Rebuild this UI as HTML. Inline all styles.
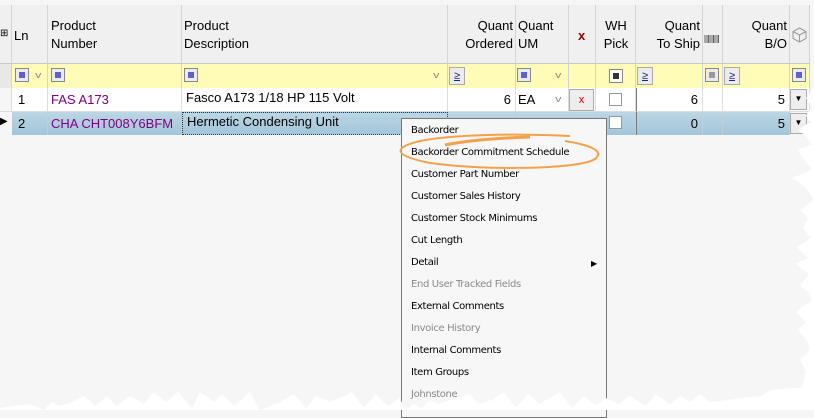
<!DOCTYPE html>
<html><head><style>
*{margin:0;padding:0;box-sizing:border-box}
body{width:814px;height:410px;overflow:hidden;background:#f6f6f6;font-family:"Liberation Sans",sans-serif;font-size:13px;color:#000;position:relative}
.a{position:absolute}
.hd{position:absolute;top:5px;height:59px;background:#f0f0f0;border-right:1px solid #d4d4d4;border-bottom:1px solid #c8c8c8}
.hd span{position:absolute;top:12px;line-height:18px}
.fl{position:absolute;top:64px;height:24px;background:#fffcb8;border-right:1px solid #d4d4d4}
.r1{position:absolute;top:88px;height:24px;background:#fff;border-right:1px solid #ddd;border-bottom:1px solid #ddd}
.r2{position:absolute;top:112px;height:23px;background:linear-gradient(#bcd6e4,#a3c5d9);border-right:1px solid #bcd0dc}
.bx{position:absolute;width:14px;height:14px;border:1px solid #888;background:#ececec}
.bx i{position:absolute;left:3px;top:3px;width:6px;height:6px;background:#5f5fd0}
.ge{position:absolute;width:16px;height:18px;border:1px solid #aaa;background:#ececec;color:#22228a;font-size:11px;text-align:center;line-height:16px;text-decoration:underline}
.chev{position:absolute;color:#888;font-size:9px;transform:scaleX(1.4)}
.mi{position:absolute;left:411px;font-family:"DejaVu Sans",sans-serif;font-size:10px;letter-spacing:-0.35px}
.dis{color:#8a8a8a}
</style></head><body>
<div class="a" style="left:0;top:5px;width:810px;height:1px;background:#ccc"></div>
<div class="hd" style="left:0;width:12px"><span style="left:0;top:20px;font-size:10px">⊞</span></div>
<div class="hd" style="left:12px;width:36px"><span style="left:2px;top:22px">Ln</span></div>
<div class="hd" style="left:48px;width:134px"><span style="left:3px">Product<br>Number</span></div>
<div class="hd" style="left:182px;width:266px"><span style="left:2px">Product<br>Description</span></div>
<div class="hd" style="left:448px;width:68px"><span style="right:2px;text-align:right">Quant<br>Ordered</span></div>
<div class="hd" style="left:516px;width:53px"><span style="left:2px">Quant<br>UM</span></div>
<div class="hd" style="left:569px;width:27px"><span style="left:9px;top:22px;color:#900;font-weight:bold">x</span></div>
<div class="hd" style="left:596px;width:40px"><span style="left:0;width:40px;text-align:center">WH<br>Pick</span></div>
<div class="hd" style="left:636px;width:67px"><span style="right:2px;text-align:right">Quant<br>To Ship</span></div>
<div class="hd" style="left:703px;width:20px"><svg class="a" style="left:1px;top:30px" width="16" height="8"><path d="M1 0v8M3 0v8M4.5 0v8M6 0v8M8 0v8M9.5 0v8M11 0v8M13 0v8M14.5 0v8" stroke="#555" stroke-width="0.9"/></svg></div>
<div class="hd" style="left:723px;width:67px"><span style="right:2px;text-align:right">Quant<br>B/O</span></div>
<div class="hd" style="left:790px;width:20px"><svg class="a" style="left:2px;top:22px" width="15" height="16"><path d="M7.5 1L14 4.5V11.5L7.5 15L1 11.5V4.5Z M1 4.5L7.5 8L14 4.5 M7.5 8V15" fill="none" stroke="#999"/></svg></div>
<div class="fl" style="left:0;width:12px;background:#e8e8e8"></div>
<div class="fl" style="left:12px;width:36px"><div class="bx" style="left:3px;top:4px"><i></i></div><span class="chev" style="left:24px;top:6px">v</span></div>
<div class="fl" style="left:48px;width:134px"><div class="bx" style="left:3px;top:4px"><i></i></div></div>
<div class="fl" style="left:182px;width:266px"><div class="bx" style="left:2px;top:4px"><i></i></div><span class="chev" style="left:252px;top:6px">v</span></div>
<div class="fl" style="left:448px;width:68px"><div class="ge" style="left:1px;top:3px">≥</div></div>
<div class="fl" style="left:516px;width:53px"><div class="bx" style="left:1px;top:4px"><i></i></div><span class="chev" style="left:40px;top:6px">v</span></div>
<div class="fl" style="left:569px;width:27px"></div>
<div class="fl" style="left:596px;width:40px"><div class="bx" style="left:13px;top:5px;background:#fff"><i style="background:#333"></i></div></div>
<div class="fl" style="left:636px;width:67px"><div class="ge" style="left:1px;top:3px">≥</div></div>
<div class="fl" style="left:703px;width:20px"><div class="bx" style="left:2px;top:4px"><i style="background:#999"></i></div></div>
<div class="fl" style="left:723px;width:67px"><div class="ge" style="left:1px;top:3px">≥</div></div>
<div class="fl" style="left:790px;width:20px"><div class="bx" style="left:2px;top:4px"><i></i></div></div>
<div class="r1" style="left:0;width:12px;background:#f6f6f6"></div>
<div class="r1" style="left:12px;width:36px"><span class="a" style="left:6px;top:4px">1</span></div>
<div class="r1" style="left:48px;width:134px"><span class="a" style="left:3px;top:4px;color:#800080">FAS A173</span></div>
<div class="r1" style="left:182px;width:266px"><span class="a" style="left:4px;top:2px">Fasco A173 1/18 HP 115 Volt</span></div>
<div class="r1" style="left:448px;width:68px"><span class="a" style="right:4px;top:4px">6</span></div>
<div class="r1" style="left:516px;width:53px"><span class="a" style="left:2px;top:4px">EA</span><span class="chev" style="left:40px;top:6px">v</span></div>
<div class="r1" style="left:569px;width:27px"><div class="a" style="left:0;top:1px;width:25px;height:22px;border:1px solid #aaa;background:#eee;color:#e00;text-align:center;line-height:20px;font-size:11px">x</div></div>
<div class="r1" style="left:596px;width:40px"><div class="a" style="left:13px;top:5px;width:13px;height:13px;border:1px solid #999;background:#fff"></div></div>
<div class="r1" style="left:636px;width:67px;border-left:1px solid #777"><span class="a" style="right:4px;top:4px">6</span></div>
<div class="r1" style="left:703px;width:20px"></div>
<div class="r1" style="left:723px;width:67px"><span class="a" style="right:4px;top:4px">5</span></div>
<div class="r1" style="left:790px;width:20px"><div class="a" style="left:0;top:1px;width:17px;height:21px;border:1px solid #aaa;background:#eee;text-align:center;font-size:8px;line-height:18px">▼</div></div>
<div class="a" style="left:0;top:116px;font-size:10px">▶</div>
<div class="r2" style="left:12px;width:36px"><span class="a" style="left:6px;top:4px">2</span></div>
<div class="r2" style="left:48px;width:134px"><span class="a" style="left:3px;top:4px;color:#800080">CHA CHT008Y6BFM</span></div>
<div class="r2" style="left:182px;width:266px;border:1px dotted #333"><span class="a" style="left:4px;top:1px">Hermetic Condensing Unit</span></div>
<div class="r2" style="left:448px;width:68px"></div>
<div class="r2" style="left:516px;width:53px"></div>
<div class="r2" style="left:569px;width:27px"></div>
<div class="r2" style="left:596px;width:40px"><div class="a" style="left:13px;top:4px;width:13px;height:13px;border:1px solid #999;background:#fff"></div></div>
<div class="r2" style="left:636px;width:67px;border-left:1px solid #777"><span class="a" style="right:4px;top:4px">0</span></div>
<div class="r2" style="left:703px;width:20px"></div>
<div class="r2" style="left:723px;width:67px"><span class="a" style="right:4px;top:4px">5</span></div>
<div class="r2" style="left:790px;width:20px;background:none"><div class="a" style="left:0;top:1px;width:17px;height:21px;border:1px solid #aaa;background:#eee;text-align:center;font-size:8px;line-height:18px">▼</div></div>
<div class="a" style="left:401px;top:118px;width:206px;height:300px;background:#f7f7f7;border:1px solid #777"></div>
<div class="mi" style="top:125px">Backorder</div>
<div class="mi" style="top:147px">Backorder Commitment Schedule</div>
<div class="mi" style="top:169px">Customer Part Number</div>
<div class="mi" style="top:191px">Customer Sales History</div>
<div class="mi" style="top:213px">Customer Stock Minimums</div>
<div class="mi" style="top:235px">Cut Length</div>
<div class="mi" style="top:257px">Detail</div>
<div class="a" style="left:591px;top:259px;font-size:8px">▶</div>
<div class="mi dis" style="top:279px">End User Tracked Fields</div>
<div class="mi" style="top:301px">External Comments</div>
<div class="mi dis" style="top:323px">Invoice History</div>
<div class="mi" style="top:345px">Internal Comments</div>
<div class="mi" style="top:367px">Item Groups</div>
<div class="mi dis" style="top:389px">Johnstone</div>
<svg class="a" style="left:390px;top:125px" width="220" height="50"><path d="M180 11 C120 8 60 10 30 16 C5 22 0 30 40 38 C100 46 190 44 205 34 C215 26 200 20 175 16" fill="none" stroke="#f5a04a" stroke-width="2"/><path d="M140 12 C110 13 80 15 55 20" fill="none" stroke="#f5a04a" stroke-width="3"/></svg>
<svg class="a" style="left:0;top:0" width="814" height="410"><polygon fill="#fff" points="814,0 814,410 0,410 0,408 30,404 44,410 52,402 60,406 72,402 84,396 95,406 107,396 116,406 130,396 144,404 154,392 166,402 178,392 192,408 200,392 214,402 222,394 234,406 250,392 260,410 280,402 294,394 306,408 316,396 330,402 340,398 352,392 364,408 376,394 388,406 400,398 405,410 406,410 414,404 422,408 430,400 438,404 470,394 478,404 492,400 504,392 516,408 528,394 540,404 560,392 572,408 584,396 596,406 606,398 618,404 630,396 646,406 656,394 670,404 680,396 690,402 700,394 710,402 760,396 772,390 790,388 802,388 806,372 800,360 810,350 807,340 798,330 806,322 796,312 812,300 808,292 800,286 809,274 796,264 808,258 797,247 811,238 803,228 808,218 800,210 814,200 804,186 792,178 812,170 806,162 798,150 812,144 806,136 798,130 810,122 806,116 812,106 806,98 814,88"/></svg>
</body></html>
